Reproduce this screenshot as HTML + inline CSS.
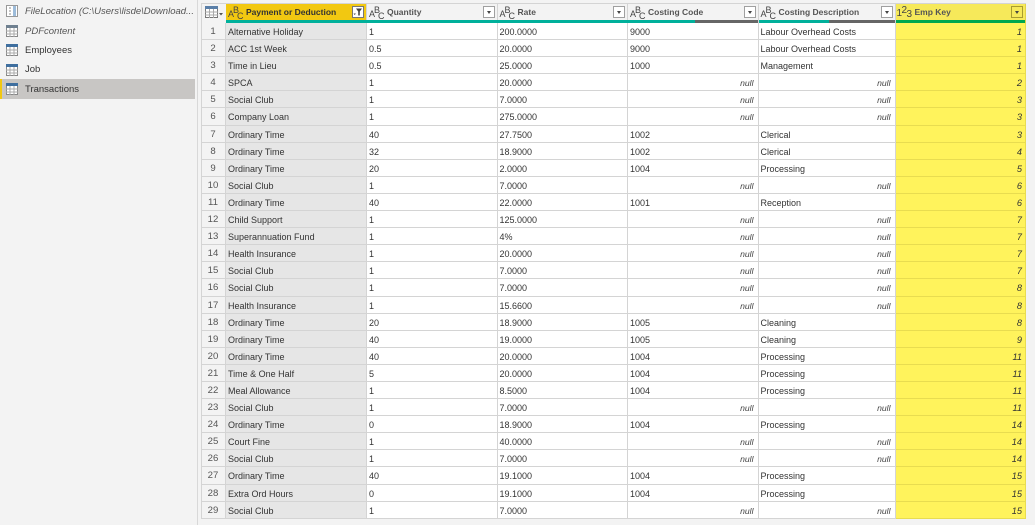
<!DOCTYPE html>
<html><head><meta charset="utf-8"><style>
html,body{margin:0;padding:0;background:#f3f3f3;width:1035px;height:525px;overflow:hidden;font-family:"Liberation Sans",sans-serif;color:#333}
#side{position:absolute;left:0;top:0;width:195px;height:525px;font-size:9.5px}
.q{position:absolute;left:0;width:195px;height:20px;line-height:20px}
.q span{position:absolute;left:25px;top:0;white-space:nowrap}
.q svg{position:absolute;left:6px;top:4px}
.q.s{background:#c8c6c4;box-shadow:inset 2px 0 #f2c811}
#div{position:absolute;left:197px;top:0;width:1px;height:525px;background:#d8d8d8}
#hdb{position:absolute;left:201px;top:3px;width:1px;height:20px;background:#d4d4d4}
#hd{position:absolute;left:202px;top:3px;width:824px;height:20px;background:#f3f3f3;border-top:1px solid #d4d4d4;box-sizing:border-box}
.h{position:absolute;top:0;height:19px;font-size:8.5px;font-weight:bold;color:#555;line-height:15px;white-space:nowrap;box-sizing:border-box;border-right:1px solid #d4d4d4}
.h b{position:absolute;left:20px;top:1px;font-weight:bold;font-size:8.5px}
.ty{position:absolute;left:2px;top:1px;font-size:9px;font-weight:normal;color:#444;width:16px;height:16px}
.ty i{position:absolute;font-style:normal;line-height:10px}
.fb{position:absolute;right:2px;top:2px;width:12px;height:12px;background:#fff;border:1px solid #a0a0a0;box-sizing:border-box}
.fb:after{content:"";position:absolute;left:3px;top:4px;border:2.5px solid transparent;border-top:3px solid #444;border-bottom:0}
.fb.f:after{display:none}
.fb svg{position:absolute;left:0;top:0}
.bar{position:absolute;left:0;top:16px;height:3px}
#g{position:absolute;left:201px;top:23px;width:825px;display:grid;grid-template-columns:24px 141px 130.5px 130.5px 130.5px 137px 130.5px;grid-auto-rows:17.1px;font-size:9px;color:#333;border-left:1px solid #d4d4d4;box-sizing:border-box}
#g div{box-sizing:border-box;border-right:1px solid #d4d4d4;border-bottom:1px solid #d4d4d4;line-height:18px;padding:0 4px 0 2px;white-space:nowrap;overflow:hidden;background:#fff}
#g .n{background:#f3f3f3;text-align:center;padding:0 1px 0 0;color:#555;font-size:9.6px}
#g .p{background:#e6e6e6}
#g .nl{font-style:italic;text-align:right;font-size:8.6px;padding-right:4px;color:#444}
#g .k{background:#fff35c;font-style:italic;text-align:right;border-color:#e8dc50;padding-right:3px;font-size:9.2px}
</style></head><body>
<div id="side">
<div class="q" style="top:1px"><svg width="12" height="12" viewBox="0 0 12 12"><rect x=".5" y=".5" width="11" height="11" fill="#fff" stroke="#999"/><path d="M3 3h2M3 6h2M3 9h2" stroke="#888"/><path d="M7 2h3M7 4h3M7 6h3M7 8h3M7 10h3" stroke="#3b78b5"/></svg><span style="font-style:italic;color:#555;top:1px">FileLocation (C:\Users\lisde\Download...</span></div>
<div class="q" style="top:21px"><svg width="12" height="12" viewBox="0 0 12 12"><rect x=".5" y=".5" width="11" height="11" fill="#fff" stroke="#888"/><rect x="0" y="0" width="12" height="3" fill="#6f8090"/><path d="M0 6h12M0 9h12M4 3v9M8 3v9" stroke="#aaa"/></svg><span style="font-style:italic;color:#555;top:1px">PDFcontent</span></div>
<div class="q" style="top:40px"><svg width="12" height="12" viewBox="0 0 12 12"><rect x=".5" y=".5" width="11" height="11" fill="#fff" stroke="#888"/><rect x="0" y="0" width="12" height="3" fill="#3f6f9f"/><path d="M0 6h12M0 9h12M4 3v9M8 3v9" stroke="#aaa"/></svg><span style="top:1px">Employees</span></div>
<div class="q" style="top:60px"><svg width="12" height="12" viewBox="0 0 12 12"><rect x=".5" y=".5" width="11" height="11" fill="#fff" stroke="#888"/><rect x="0" y="0" width="12" height="3" fill="#3f6f9f"/><path d="M0 6h12M0 9h12M4 3v9M8 3v9" stroke="#aaa"/></svg><span>Job</span></div>
<div class="q s" style="top:79px"><svg width="12" height="12" viewBox="0 0 12 12"><rect x=".5" y=".5" width="11" height="11" fill="#fff" stroke="#888"/><rect x="0" y="0" width="12" height="3" fill="#3f6f9f"/><path d="M0 6h12M0 9h12M4 3v9M8 3v9" stroke="#aaa"/></svg><span style="top:1px">Transactions</span></div>
</div>
<div id="div"></div>
<div id="hdb"></div>
<div id="hd">
<svg style="position:absolute;left:3px;top:2px" width="18" height="13" viewBox="0 0 18 13"><rect x=".5" y=".5" width="12" height="11" fill="#fff" stroke="#777"/><rect x="0" y="0" width="13" height="3" fill="#5a7fa8"/><path d="M0 6h13M0 9h13M4.5 3v9M8.5 3v9" stroke="#aaa"/><path d="M14 7h4l-2 2.5z" fill="#555"/></svg>
<div class="h" style="left:24px;width:141px;background:#f2c811;color:#333"><span class="ty"><i style="left:0;top:4px">A</i><i style="left:5px;top:0">B</i><i style="left:9px;top:6px">C</i></span><b style="color:#333">Payment or Deduction</b><span class="fb f" style="border-color:#777"><svg width="10" height="10" viewBox="0 0 10 10"><path d="M3 1.5h6L6.8 4.5v4H5.2v-4z" fill="#444"/><path d="M.5 6.5h2.4L1.7 8z" fill="#444"/></svg></span><span class="bar" style="width:141px;background:#00b09b"></span></div>
<div class="h" style="left:165px;width:130.5px"><span class="ty"><i style="left:0;top:4px">A</i><i style="left:5px;top:0">B</i><i style="left:9px;top:6px">C</i></span><b>Quantity</b><span class="fb"></span><span class="bar" style="width:130.5px;background:#00b09b"></span></div>
<div class="h" style="left:295.5px;width:130.5px"><span class="ty"><i style="left:0;top:4px">A</i><i style="left:5px;top:0">B</i><i style="left:9px;top:6px">C</i></span><b>Rate</b><span class="fb"></span><span class="bar" style="width:130.5px;background:#00b09b"></span></div>
<div class="h" style="left:426px;width:130.5px"><span class="ty"><i style="left:0;top:4px">A</i><i style="left:5px;top:0">B</i><i style="left:9px;top:6px">C</i></span><b>Costing Code</b><span class="fb"></span><span class="bar" style="width:67px;background:#00b09b"></span><span class="bar" style="left:67px;width:62.5px;background:#666"></span></div>
<div class="h" style="left:556.5px;width:137px"><span class="ty"><i style="left:0;top:4px">A</i><i style="left:5px;top:0">B</i><i style="left:9px;top:6px">C</i></span><b>Costing Description</b><span class="fb"></span><span class="bar" style="width:70px;background:#00b09b"></span><span class="bar" style="left:70px;width:66px;background:#666"></span></div>
<div class="h" style="left:693.5px;width:130.5px;background:#f6e95a;border-right-color:#e0d24a"><span class="ty" style="left:1px;font-size:10px"><i style="left:0;top:4px">1</i><i style="left:5px;top:1px">2</i><i style="left:10px;top:5px">3</i></span><b style="color:#555;left:19px">Emp Key</b><span class="fb" style="background:#f6e95a;border-color:#a89c30"></span><span class="bar" style="width:129.5px;background:#00a84f"></span></div>
</div>
<div id="g">
<div class="n">1</div><div class="p">Alternative Holiday</div><div>1</div><div>200.0000</div><div>9000</div><div>Labour Overhead Costs</div><div class="k">1</div>
<div class="n">2</div><div class="p">ACC 1st Week</div><div>0.5</div><div>20.0000</div><div>9000</div><div>Labour Overhead Costs</div><div class="k">1</div>
<div class="n">3</div><div class="p">Time in Lieu</div><div>0.5</div><div>25.0000</div><div>1000</div><div>Management</div><div class="k">1</div>
<div class="n">4</div><div class="p">SPCA</div><div>1</div><div>20.0000</div><div class="nl">null</div><div class="nl">null</div><div class="k">2</div>
<div class="n">5</div><div class="p">Social Club</div><div>1</div><div>7.0000</div><div class="nl">null</div><div class="nl">null</div><div class="k">3</div>
<div class="n">6</div><div class="p">Company Loan</div><div>1</div><div>275.0000</div><div class="nl">null</div><div class="nl">null</div><div class="k">3</div>
<div class="n">7</div><div class="p">Ordinary Time</div><div>40</div><div>27.7500</div><div>1002</div><div>Clerical</div><div class="k">3</div>
<div class="n">8</div><div class="p">Ordinary Time</div><div>32</div><div>18.9000</div><div>1002</div><div>Clerical</div><div class="k">4</div>
<div class="n">9</div><div class="p">Ordinary Time</div><div>20</div><div>2.0000</div><div>1004</div><div>Processing</div><div class="k">5</div>
<div class="n">10</div><div class="p">Social Club</div><div>1</div><div>7.0000</div><div class="nl">null</div><div class="nl">null</div><div class="k">6</div>
<div class="n">11</div><div class="p">Ordinary Time</div><div>40</div><div>22.0000</div><div>1001</div><div>Reception</div><div class="k">6</div>
<div class="n">12</div><div class="p">Child Support</div><div>1</div><div>125.0000</div><div class="nl">null</div><div class="nl">null</div><div class="k">7</div>
<div class="n">13</div><div class="p">Superannuation Fund</div><div>1</div><div>4%</div><div class="nl">null</div><div class="nl">null</div><div class="k">7</div>
<div class="n">14</div><div class="p">Health Insurance</div><div>1</div><div>20.0000</div><div class="nl">null</div><div class="nl">null</div><div class="k">7</div>
<div class="n">15</div><div class="p">Social Club</div><div>1</div><div>7.0000</div><div class="nl">null</div><div class="nl">null</div><div class="k">7</div>
<div class="n">16</div><div class="p">Social Club</div><div>1</div><div>7.0000</div><div class="nl">null</div><div class="nl">null</div><div class="k">8</div>
<div class="n">17</div><div class="p">Health Insurance</div><div>1</div><div>15.6600</div><div class="nl">null</div><div class="nl">null</div><div class="k">8</div>
<div class="n">18</div><div class="p">Ordinary Time</div><div>20</div><div>18.9000</div><div>1005</div><div>Cleaning</div><div class="k">8</div>
<div class="n">19</div><div class="p">Ordinary Time</div><div>40</div><div>19.0000</div><div>1005</div><div>Cleaning</div><div class="k">9</div>
<div class="n">20</div><div class="p">Ordinary Time</div><div>40</div><div>20.0000</div><div>1004</div><div>Processing</div><div class="k">11</div>
<div class="n">21</div><div class="p">Time &amp; One Half</div><div>5</div><div>20.0000</div><div>1004</div><div>Processing</div><div class="k">11</div>
<div class="n">22</div><div class="p">Meal Allowance</div><div>1</div><div>8.5000</div><div>1004</div><div>Processing</div><div class="k">11</div>
<div class="n">23</div><div class="p">Social Club</div><div>1</div><div>7.0000</div><div class="nl">null</div><div class="nl">null</div><div class="k">11</div>
<div class="n">24</div><div class="p">Ordinary Time</div><div>0</div><div>18.9000</div><div>1004</div><div>Processing</div><div class="k">14</div>
<div class="n">25</div><div class="p">Court Fine</div><div>1</div><div>40.0000</div><div class="nl">null</div><div class="nl">null</div><div class="k">14</div>
<div class="n">26</div><div class="p">Social Club</div><div>1</div><div>7.0000</div><div class="nl">null</div><div class="nl">null</div><div class="k">14</div>
<div class="n">27</div><div class="p">Ordinary Time</div><div>40</div><div>19.1000</div><div>1004</div><div>Processing</div><div class="k">15</div>
<div class="n">28</div><div class="p">Extra Ord Hours</div><div>0</div><div>19.1000</div><div>1004</div><div>Processing</div><div class="k">15</div>
<div class="n">29</div><div class="p">Social Club</div><div>1</div><div>7.0000</div><div class="nl">null</div><div class="nl">null</div><div class="k">15</div>
</div>
</body></html>
